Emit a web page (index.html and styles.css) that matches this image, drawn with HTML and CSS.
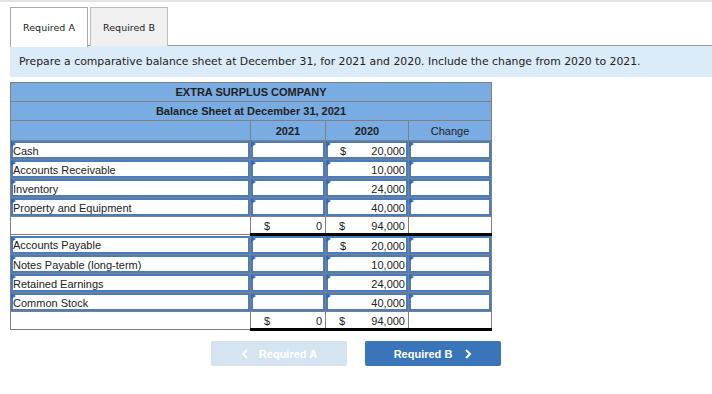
FILE: index.html
```html
<!DOCTYPE html>
<html>
<head>
<meta charset="utf-8">
<link rel="stylesheet" href="styles.css">
</head>
<body>
<div class="topline"></div>
<div class="tabs">
  <div class="tab active">Required A</div>
  <div class="tab">Required B</div>
</div>
<div class="instr">Prepare a comparative balance sheet at December 31, for 2021 and 2020. Include the change from 2020 to 2021.</div>
<table class="bs">
  <colgroup><col class="c-label"><col class="c-y1"><col class="c-y2"><col class="c-chg"></colgroup>
  <tr class="hrow"><th colspan="4">EXTRA SURPLUS COMPANY</th></tr>
  <tr class="hrow"><th colspan="4">Balance Sheet at December 31, 2021</th></tr>
  <tr class="hrow colh"><th></th><th>2021</th><th>2020</th><th class="normal">Change</th></tr>

  <tr class="drow"><td><div class="inp lbl">Cash</div></td><td><div class="inp"></div></td><td><div class="inp num"><span class="cur">$</span><span>20,000</span></div></td><td><div class="inp"></div></td></tr>
  <tr class="drow"><td><div class="inp lbl">Accounts Receivable</div></td><td><div class="inp"></div></td><td><div class="inp num"><span class="cur"></span><span>10,000</span></div></td><td><div class="inp"></div></td></tr>
  <tr class="drow"><td><div class="inp lbl">Inventory</div></td><td><div class="inp"></div></td><td><div class="inp num"><span class="cur"></span><span>24,000</span></div></td><td><div class="inp"></div></td></tr>
  <tr class="drow"><td><div class="inp lbl">Property and Equipment</div></td><td><div class="inp"></div></td><td><div class="inp num"><span class="cur"></span><span>40,000</span></div></td><td><div class="inp"></div></td></tr>
  <tr class="trow"><td class="plain"></td><td class="tot"><div class="num"><span class="cur">$</span><span>0</span></div></td><td class="tot"><div class="num"><span class="cur">$</span><span>94,000</span></div></td><td class="tot"></td></tr>

  <tr class="drow"><td><div class="inp lbl">Accounts Payable</div></td><td><div class="inp"></div></td><td><div class="inp num"><span class="cur">$</span><span>20,000</span></div></td><td><div class="inp"></div></td></tr>
  <tr class="drow"><td><div class="inp lbl">Notes Payable (long-term)</div></td><td><div class="inp"></div></td><td><div class="inp num"><span class="cur"></span><span>10,000</span></div></td><td><div class="inp"></div></td></tr>
  <tr class="drow"><td><div class="inp lbl">Retained Earnings</div></td><td><div class="inp"></div></td><td><div class="inp num"><span class="cur"></span><span>24,000</span></div></td><td><div class="inp"></div></td></tr>
  <tr class="drow"><td><div class="inp lbl">Common Stock</div></td><td><div class="inp"></div></td><td><div class="inp num"><span class="cur"></span><span>40,000</span></div></td><td><div class="inp"></div></td></tr>
  <tr class="trow"><td class="plain"></td><td class="tot"><div class="num"><span class="cur">$</span><span>0</span></div></td><td class="tot"><div class="num"><span class="cur">$</span><span>94,000</span></div></td><td class="tot"></td></tr>
</table>
<div class="nav">
  <button class="btn prev"><svg width="8" height="10" viewBox="0 0 8 10"><path d="M6 1 L2 5 L6 9" fill="none" stroke="currentColor" stroke-width="2"/></svg><span>Required A</span></button>
  <button class="btn next"><span>Required B</span><svg width="8" height="10" viewBox="0 0 8 10"><path d="M2 1 L6 5 L2 9" fill="none" stroke="currentColor" stroke-width="2"/></svg></button>
</div>
</body>
</html>
```
FILE: styles.css
```css
html, body { margin: 0; padding: 0; background: #fff; }
body { font-family: "DejaVu Sans", Verdana, sans-serif; color: #222; }

.topline { height: 2px; background: #e4e4e4; }

.tabs {
  display: flex;
  gap: 2px;
  margin: 5px 0 0 10px;
  border-bottom: 1px solid #999;
  height: 38px;
}
.tab {
  width: 76px;
  height: 38px;
  border: 1px solid #bdbdbd;
  border-bottom: none;
  background: #f0f0f0;
  font-size: 9.5px;
  display: flex;
  align-items: center;
  justify-content: center;
  color: #222;
}
.tab.active {
  background: #fff;
  height: 39px;
  border-color: #aaa;
  width: 76px;
}

.instr {
  margin-left: 10px;
  height: 31px;
  background: #dcebf8;
  font-size: 10.85px;
  display: flex;
  align-items: center;
  padding-left: 9px;
  color: #222;
}

.bs {
  margin: 5px 0 0 10px;
  border-collapse: collapse;
  width: 481px;
  table-layout: fixed;
  font-family: "Liberation Sans", Arial, sans-serif;
  font-size: 11px;
  color: #222;
}
.c-label { width: 240px; }
.c-y1 { width: 75px; }
.c-y2 { width: 83px; }
.c-chg { width: 83px; }

.bs th, .bs td {
  border: 1px solid #808080;
  padding: 0;
}
.hrow th {
  background: #79ace3;
  height: 18px;
  font-weight: bold;
  color: #222;
  text-align: center;
}
.colh th { height: 19px; }
.hrow th.normal { font-weight: normal; }

.drow td { height: 18px; }
.inp {
  position: relative;
  box-sizing: border-box;
  height: 18px;
  border: 2px solid #4a7dc0;
  background: #fff;
}
.inp::before {
  content: "";
  position: absolute;
  left: -2px;
  top: -2px;
  border-left: 5px solid #2f6cc0;
  border-top: 3px solid transparent;
  border-bottom: 3px solid transparent;
}
.lbl {
  display: flex;
  align-items: center;
  padding-top: 1px;
  padding-left: 0;
}
.num {
  display: flex;
  justify-content: space-between;
  align-items: center;
  padding: 1px 1px 0 12px;
  height: 18px;
  box-sizing: border-box;
}
.inp.num { padding-right: 1px; }

.trow td { height: 16px; }
.trow td .num { height: 16px; }
.trow td.tot {
  border-top: 1px solid #000;
  border-bottom: 3px solid #000;
}
.trow td.tot .num { padding-left: 13px; padding-right: 3px; }

.nav {
  display: flex;
  gap: 18px;
  margin: 10px 0 0 211px;
}
.btn {
  width: 136px;
  height: 25px;
  border: none;
  border-radius: 2px;
  color: #fff;
  font-family: "Liberation Sans", Arial, sans-serif;
  font-size: 11px;
  font-weight: bold;
  display: flex;
  align-items: center;
  justify-content: center;
  gap: 10px;
  padding: 0;
}
.btn.prev { background: #d6e3f1; }
.btn.next { background: #3a75b9; gap: 12px; }
```
